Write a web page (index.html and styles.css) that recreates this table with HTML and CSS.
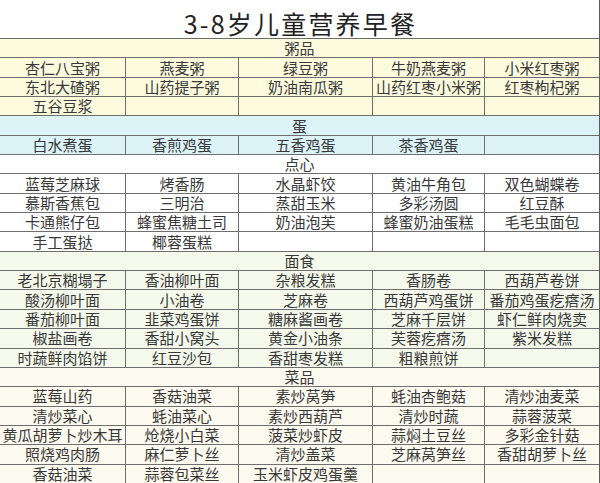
FILE: index.html
```html
<!DOCTYPE html>
<html lang="zh-CN">
<head>
<meta charset="utf-8">
<title>3-8岁儿童营养早餐</title>
<link rel="stylesheet" href="styles.css">
</head>
<body>
<div class="sheet">
  <h1 class="title">3-8岁儿童营养早餐</h1>
  <div class="grid">
    <div class="sec zhou">粥品</div>
    <div class="c zhou">杏仁八宝粥</div><div class="c zhou">燕麦粥</div><div class="c zhou">绿豆粥</div><div class="c zhou">牛奶燕麦粥</div><div class="c zhou">小米红枣粥</div>
    <div class="c zhou">东北大碴粥</div><div class="c zhou">山药提子粥</div><div class="c zhou">奶油南瓜粥</div><div class="c zhou">山药红枣小米粥</div><div class="c zhou">红枣枸杞粥</div>
    <div class="c zhou">五谷豆浆</div><div class="c zhou"></div><div class="c zhou"></div><div class="c zhou"></div><div class="c zhou"></div>

    <div class="sec dan">蛋</div>
    <div class="c dan">白水煮蛋</div><div class="c dan">香煎鸡蛋</div><div class="c dan">五香鸡蛋</div><div class="c dan">茶香鸡蛋</div><div class="c dan"></div>

    <div class="sec dx">点心</div>
    <div class="c dx">蓝莓芝麻球</div><div class="c dx">烤香肠</div><div class="c dx">水晶虾饺</div><div class="c dx">黄油牛角包</div><div class="c dx">双色蝴蝶卷</div>
    <div class="c dx">慕斯香蕉包</div><div class="c dx">三明治</div><div class="c dx">蒸甜玉米</div><div class="c dx">多彩汤圆</div><div class="c dx">红豆酥</div>
    <div class="c dx">卡通熊仔包</div><div class="c dx">蜂蜜焦糖土司</div><div class="c dx">奶油泡芙</div><div class="c dx">蜂蜜奶油蛋糕</div><div class="c dx">毛毛虫面包</div>
    <div class="c dx">手工蛋挞</div><div class="c dx">椰蓉蛋糕</div><div class="c dx"></div><div class="c dx"></div><div class="c dx"></div>

    <div class="sec ms">面食</div>
    <div class="c ms">老北京糊塌子</div><div class="c ms">香油柳叶面</div><div class="c ms">杂粮发糕</div><div class="c ms">香肠卷</div><div class="c ms">西葫芦卷饼</div>
    <div class="c ms">酸汤柳叶面</div><div class="c ms">小油卷</div><div class="c ms">芝麻卷</div><div class="c ms">西葫芦鸡蛋饼</div><div class="c ms">番茄鸡蛋疙瘩汤</div>
    <div class="c ms">番茄柳叶面</div><div class="c ms">韭菜鸡蛋饼</div><div class="c ms">糖麻酱画卷</div><div class="c ms">芝麻千层饼</div><div class="c ms">虾仁鲜肉烧卖</div>
    <div class="c ms">椒盐画卷</div><div class="c ms">香甜小窝头</div><div class="c ms">黄金小油条</div><div class="c ms">芙蓉疙瘩汤</div><div class="c ms">紫米发糕</div>
    <div class="c ms">时蔬鲜肉馅饼</div><div class="c ms">红豆沙包</div><div class="c ms">香甜枣发糕</div><div class="c ms">粗粮煎饼</div><div class="c ms"></div>

    <div class="sec cp">菜品</div>
    <div class="c cp">蓝莓山药</div><div class="c cp">香菇油菜</div><div class="c cp">素炒莴笋</div><div class="c cp">蚝油杏鲍菇</div><div class="c cp">清炒油麦菜</div>
    <div class="c cp">清炒菜心</div><div class="c cp">蚝油菜心</div><div class="c cp">素炒西葫芦</div><div class="c cp">清炒时蔬</div><div class="c cp">蒜蓉菠菜</div>
    <div class="c cp">黄瓜胡萝卜炒木耳</div><div class="c cp">炝烧小白菜</div><div class="c cp">菠菜炒虾皮</div><div class="c cp">蒜焖土豆丝</div><div class="c cp">多彩金针菇</div>
    <div class="c cp">照烧鸡肉肠</div><div class="c cp">麻仁萝卜丝</div><div class="c cp">清炒盖菜</div><div class="c cp">芝麻莴笋丝</div><div class="c cp">香甜胡萝卜丝</div>
    <div class="c cp">香菇油菜</div><div class="c cp">蒜蓉包菜丝</div><div class="c cp">玉米虾皮鸡蛋羹</div><div class="c cp"></div><div class="c cp"></div>
  </div>
</div>
</body>
</html>
```

FILE: styles.css
```css
html, body {
  margin: 0;
  padding: 0;
  background: #ffffff;
}

body {
  font-family: "Noto Sans CJK SC", "Noto Sans", sans-serif;
  color: #383838;
}

.sheet {
  width: 599px;
  border-right: 1px solid #5c5c5c;
}

.title {
  margin: 0;
  padding-top: 8px;
  padding-left: 2px;
  height: 30px;
  border-bottom: 1px solid #6a6a6a;
  font-size: 25px;
  font-weight: normal;
  line-height: 30px;
  text-align: center;
  color: #222222;
  letter-spacing: 2.2px;
}

.grid {
  display: grid;
  grid-template-columns: 125px 112px 133px 111px 114px;
  grid-auto-rows: 18.35px;
  gap: 1px;
  background: #6e6e6e;
}

.sec,
.c {
  display: flex;
  align-items: center;
  justify-content: center;
  font-size: 15px;
  line-height: 18px;
  white-space: nowrap;
}

.sec {
  grid-column: 1 / -1;
}

.zhou { background: #fdfbde; }
.dan  { background: #dcf3f8; }
.dx   { background: #ffffff; }
.ms   { background: #f4f9ec; }
.cp   { background: #fdfaf0; }
```
